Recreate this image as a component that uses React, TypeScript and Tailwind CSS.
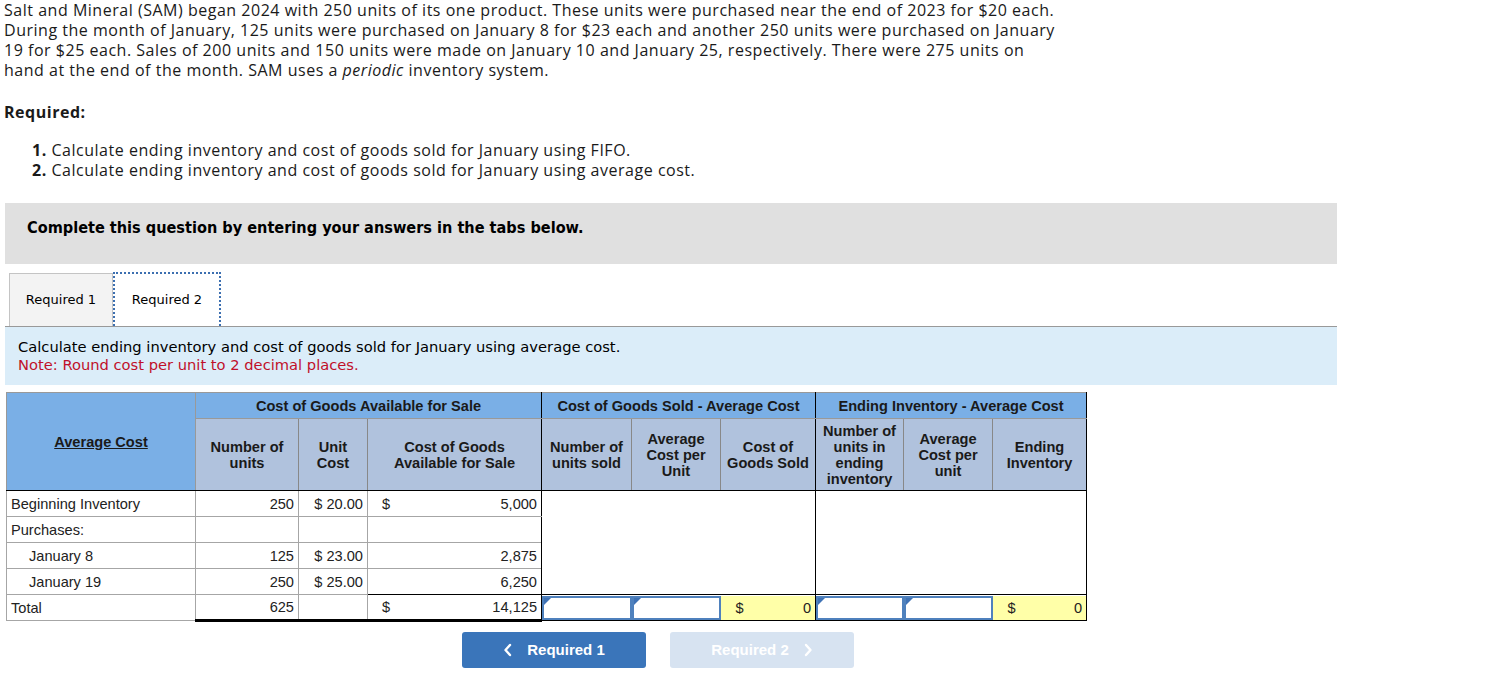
import { ReactNode } from "react";

const hdrBlue = "bg-[#7aafe6]";
const subBlue = "bg-[#b0c2dd]";

function InputBox() {
  return (
    <div className="relative h-[24px] w-full border-2 border-[#4f81bd] bg-white">
      <div className="absolute left-0 top-0 h-0 w-0 border-l-[7px] border-b-[7px] border-l-[#3f72b5] border-b-transparent" />
    </div>
  );
}

function YellowCell({ value }: { value: string }) {
  return (
    <div className="flex h-[24px] items-center justify-between bg-[#ffffa8] pl-[15px] pr-[4px]">
      <span>$</span>
      <span>{value}</span>
    </div>
  );
}

function Td({ children, className = "" }: { children?: ReactNode; className?: string }) {
  return <td className={`h-[26px] px-[4px] py-0 ${className}`}>{children}</td>;
}

export default function App() {
  const rows = [
    { label: "Beginning Inventory", indent: false, units: "250", cost: "$ 20.00", dollar: true, total: "5,000" },
    { label: "Purchases:", indent: false, units: "", cost: "", dollar: false, total: "" },
    { label: "January 8", indent: true, units: "125", cost: "$ 23.00", dollar: false, total: "2,875" },
    { label: "January 19", indent: true, units: "250", cost: "$ 25.00", dollar: false, total: "6,250" },
  ];

  return (
    <div className="min-h-[676px] bg-white text-[#1a1a1a]">
      <div className="px-[4px] font-['Open_Sans','Lato',sans-serif] text-[16px] leading-[20px] tracking-[0.52px]">
        <p className="whitespace-nowrap">
          Salt and Mineral (SAM) began 2024 with 250 units of its one product. These units were purchased near the end of 2023 for $20 each.
          <br />
          During the month of January, 125 units were purchased on January 8 for $23 each and another 250 units were purchased on January
          <br />
          19 for $25 each. Sales of 200 units and 150 units were made on January 10 and January 25, respectively. There were 275 units on
          <br />
          hand at the end of the month. SAM uses a <i>periodic</i> inventory system.
        </p>
        <p className="mt-[22px] font-bold">Required:</p>
        <ol className="mt-[18px] pl-[28px]">
          <li>
            <b>1.</b> Calculate ending inventory and cost of goods sold for January using FIFO.
          </li>
          <li>
            <b>2.</b> Calculate ending inventory and cost of goods sold for January using average cost.
          </li>
        </ol>
      </div>

      <div className="ml-[5px] mt-[23px] h-[61px] w-[1332px] bg-[#e0e0e0] pl-[22px] pt-[15px] font-['DejaVu_Sans_Condensed','DejaVu_Sans',sans-serif] text-[16.15px] font-bold leading-[20px] text-black">
        Complete this question by entering your answers in the tabs below.
      </div>

      <div className="ml-[5px] mt-[8px] w-[1332px] font-['DejaVu_Sans','Verdana',sans-serif]">
        <div className="flex items-end pl-[4px]">
          <div className="flex h-[53px] w-[104px] items-center justify-center border border-b-0 border-[#c4c4c4] bg-[#f3f3f3] text-[13px] text-black">
            Required 1
          </div>
          <div className="flex h-[54px] w-[108px] items-center justify-center border-2 border-b-0 border-dotted border-[#3c6fb0] bg-white text-[13px] text-black">
            Required 2
          </div>
        </div>
        <div className="h-[59px] border-t border-[#999] bg-[#dbedf9] pl-[13px] pt-[11px] text-[14.7px] leading-[18px]">
          <div className="text-black">Calculate ending inventory and cost of goods sold for January using average cost.</div>
          <div className="text-[#c0102a]">Note: Round cost per unit to 2 decimal places.</div>
        </div>
      </div>

      <div className="ml-[6px] mt-[7px]">
        <table className="table-fixed border-collapse font-['Liberation_Sans',Arial,sans-serif] text-[14.6px] leading-[16px] text-[#222]">
          <colgroup>
            <col className="w-[189px]" />
            <col className="w-[103px]" />
            <col className="w-[69px]" />
            <col className="w-[174px]" />
            <col className="w-[90px]" />
            <col className="w-[89px]" />
            <col className="w-[95px]" />
            <col className="w-[88px]" />
            <col className="w-[89px]" />
            <col className="w-[94px]" />
          </colgroup>
          <thead className="font-bold text-[#1a1a1a]">
            <tr className="h-[26px]">
              <th rowSpan={2} className={`${hdrBlue} border border-[#999] border-b-black align-middle`}>
                <span className="underline">Average Cost</span>
              </th>
              <th colSpan={3} className={`${hdrBlue} border border-[#999] border-r-black`}>
                Cost of Goods Available for Sale
              </th>
              <th colSpan={3} className={`${hdrBlue} border border-[#999] border-r-black`}>
                Cost of Goods Sold - Average Cost
              </th>
              <th colSpan={3} className={`${hdrBlue} border border-[#999] border-r-black`}>
                Ending Inventory - Average Cost
              </th>
            </tr>
            <tr className="h-[72px]">
              <th className={`${subBlue} border border-[#888] border-b-black`}>Number of<br />units</th>
              <th className={`${subBlue} border border-[#888] border-b-black`}>Unit<br />Cost</th>
              <th className={`${subBlue} border border-[#888] border-b-black border-r-black`}>Cost of Goods<br />Available for Sale</th>
              <th className={`${subBlue} border border-[#888] border-b-black`}>Number of<br />units sold</th>
              <th className={`${subBlue} border border-[#888] border-b-black`}>Average<br />Cost per<br />Unit</th>
              <th className={`${subBlue} border border-[#888] border-b-black border-r-black`}>Cost of<br />Goods Sold</th>
              <th className={`${subBlue} border border-[#888] border-b-black`}>Number of<br />units in<br />ending<br />inventory</th>
              <th className={`${subBlue} border border-[#888] border-b-black`}>Average<br />Cost per<br />unit</th>
              <th className={`${subBlue} border border-[#888] border-b-black border-r-black`}>Ending<br />Inventory</th>
            </tr>
          </thead>
          <tbody>
            {rows.map((r, i) => (
              <tr key={r.label}>
                <Td className={`border border-[#a6a6a6] ${r.indent ? "pl-[22px]" : ""}`}>{r.label}</Td>
                <Td className="border border-[#a6a6a6] text-right">{r.units}</Td>
                <Td className="border border-[#a6a6a6] text-right">{r.cost}</Td>
                <Td className={`border border-[#a6a6a6] border-r-black ${i === 3 ? "border-b-black" : ""}`}>
                  <div className="flex justify-between pl-[10px]">
                    <span>{r.dollar ? "$" : ""}</span>
                    <span>{r.total}</span>
                  </div>
                </Td>
                {i === 0 && (
                  <>
                    <td colSpan={3} rowSpan={4} className="border border-black bg-white" />
                    <td colSpan={3} rowSpan={4} className="border border-black bg-white" />
                  </>
                )}
              </tr>
            ))}
            <tr>
              <Td className="border border-[#a6a6a6]">Total</Td>
              <Td className="border border-[#a6a6a6] border-t-black border-b-[3px] border-b-black text-right">625</Td>
              <Td className="border border-[#a6a6a6] border-t-black border-b-[3px] border-b-black" />
              <Td className="border border-[#a6a6a6] border-t-black border-b-[3px] border-b-black border-r-black">
                <div className="flex justify-between pl-[10px]">
                  <span>$</span>
                  <span>14,125</span>
                </div>
              </Td>
              <td className="border border-black border-r-0 p-0"><InputBox /></td>
              <td className="border-y border-black p-0"><InputBox /></td>
              <td className="border border-black border-l-0 p-0"><YellowCell value="0" /></td>
              <td className="border border-black border-r-0 p-0"><InputBox /></td>
              <td className="border-y border-black p-0"><InputBox /></td>
              <td className="border border-black border-l-0 p-0"><YellowCell value="0" /></td>
            </tr>
          </tbody>
        </table>
      </div>

      <div className="mt-[10px] flex gap-[24px] pl-[462px] font-['Liberation_Sans',Arial,sans-serif] text-[15px] font-bold text-white">
        <button className="flex h-[36px] w-[184px] items-center justify-center gap-[14px] rounded-[3px] bg-[#3a75ba]">
          <svg width="10" height="14" viewBox="0 0 10 14" fill="none" stroke="white" strokeWidth="2.4" strokeLinecap="round" strokeLinejoin="round">
            <path d="M7 2 L2.5 7 L7 12" />
          </svg>
          <span>Required 1</span>
        </button>
        <button className="flex h-[36px] w-[184px] items-center justify-center gap-[14px] rounded-[3px] bg-[#d7e3f1]">
          <span>Required 2</span>
          <svg width="10" height="14" viewBox="0 0 10 14" fill="none" stroke="white" strokeWidth="2.4" strokeLinecap="round" strokeLinejoin="round">
            <path d="M3 2 L7.5 7 L3 12" />
          </svg>
        </button>
      </div>
    </div>
  );
}
